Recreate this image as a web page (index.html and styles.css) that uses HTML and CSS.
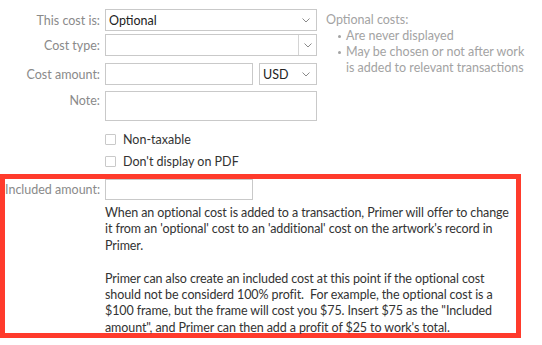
FILE: index.html
```html
<!DOCTYPE html>
<html>
<head>
<meta charset="utf-8">
<link rel="stylesheet" href="styles.css">
</head>
<body>
<div class="top">
  <div class="form">
    <div class="row r1">
      <div class="label">This cost is:</div>
      <div class="select wide"><span class="val">Optional</span><svg class="chev" width="8" height="5" viewBox="0 0 8 5"><path d="M0.5 0.5 L4 4 L7.5 0.5" fill="none" stroke="#8a8a8a" stroke-width="1"/></svg></div>
    </div>
    <div class="row r2">
      <div class="label">Cost type:</div>
      <div class="select wide split"><span class="val"></span><span class="btn"><svg class="chev" width="8" height="5" viewBox="0 0 8 5"><path d="M0.5 0.5 L4 4 L7.5 0.5" fill="none" stroke="#8a8a8a" stroke-width="1"/></svg></span></div>
    </div>
    <div class="row r3">
      <div class="label">Cost amount:</div>
      <div class="input amount"></div>
      <div class="select cur"><span class="val">USD</span><svg class="chev" width="8" height="5" viewBox="0 0 8 5"><path d="M0.5 0.5 L4 4 L7.5 0.5" fill="none" stroke="#8a8a8a" stroke-width="1"/></svg></div>
    </div>
    <div class="row r4">
      <div class="label note-label">Note:</div>
      <div class="input note"></div>
    </div>
    <div class="check c1"><span class="box"></span><span class="ctext">Non-taxable</span></div>
    <div class="check c2"><span class="box"></span><span class="ctext">Don't display on PDF</span></div>
  </div>
  <div class="aside">
    <div>Optional costs:</div>
    <ul>
      <li>Are never displayed</li>
      <li>May be chosen or not after work is added to relevant transactions</li>
    </ul>
  </div>
</div>
<div class="highlight">
  <div class="row inc">
    <div class="label">Included amount:</div>
    <div class="input amount"></div>
  </div>
  <div class="help">
    <p>When an optional cost is added to a transaction, Primer will offer to change it from an 'optional' cost to an 'additional' cost on the artwork's record in Primer.</p>
    <p>Primer can also create an included cost at this point if the optional cost should not be considerd 100% profit.&nbsp; For example, the optional cost is a $100 frame, but the frame will cost you $75. Insert $75 as the "Included amount", and Primer can then add a profit of $25 to work's total.</p>
  </div>
</div>
</body>
</html>
```
FILE: styles.css
```css
html, body {
  margin: 0;
  padding: 0;
  background: #ffffff;
}
body {
  font-family: Lato, "Open Sans", sans-serif;
  font-size: 12.5px;
  color: #333333;
  width: 542px;
  height: 345px;
  overflow: hidden;
}
.top {
  display: flex;
  padding-top: 9px;
}
.form {
  width: 317px;
  flex: none;
}
.row {
  display: flex;
  align-items: center;
}
.label {
  width: 105px;
  flex: none;
  text-align: right;
  padding-right: 5px;
  box-sizing: border-box;
  color: #8a8a8a;
  white-space: nowrap;
}
.select, .input {
  box-sizing: border-box;
  border: 1px solid #c9c9c9;
  background: #fff;
  height: 22px;
  display: flex;
  align-items: center;
}
.select .val {
  flex: 1;
  padding-left: 3px;
  color: #222;
}
.select .chev {
  margin-right: 6px;
}
.wide { width: 212px; }
.split .btn {
  width: 17px;
  height: 100%;
  border-left: 1px solid #d4d4d4;
  display: flex;
  align-items: center;
  justify-content: center;
}
.split .btn .chev { margin: 0; }
.r2 { margin-top: 3px; }
.r3 { margin-top: 7px; }
.r4 { margin-top: 6px; align-items: flex-start; }
.amount { width: 148px; }
.cur { width: 58px; margin-left: 6px; }
.note { width: 212px; height: 30px; }
.note-label { padding-top: 2px; }
.check {
  display: flex;
  align-items: center;
  margin-left: 105px;
  height: 14px;
}
.c1 { margin-top: 11px; }
.c2 { margin-top: 8px; }
.box {
  width: 11px;
  height: 11px;
  box-sizing: border-box;
  border: 1px solid #c9c9c9;
  border-radius: 1px;
  background: #fff;
}
.ctext {
  margin-left: 7px;
  color: #333;
}
.aside {
  margin-left: 9px;
  margin-top: 3px;
  color: #a3a3a3;
  line-height: 16px;
}
.aside ul {
  margin: 0;
  padding-left: 20px;
  width: 180px;
  list-style: none;
}
.aside li {
  position: relative;
}
.aside li::before {
  content: "";
  position: absolute;
  left: -8px;
  top: 7px;
  width: 3px;
  height: 3px;
  border-radius: 50%;
  background: #a3a3a3;
}
.highlight {
  margin-top: 6px;
  width: 521px;
  height: 164px;
  box-sizing: border-box;
  border: 5px solid #ff3b2c;
}
.highlight .label { width: 100px; }
.inc .input { height: 21px; }
.help {
  margin-left: 100px;
  margin-top: 5px;
  line-height: 16.4px;
  color: #333;
  letter-spacing: -0.1px;
  padding-right: 4px;
}
.help p {
  margin: 0 0 16.4px 0;
}
```
